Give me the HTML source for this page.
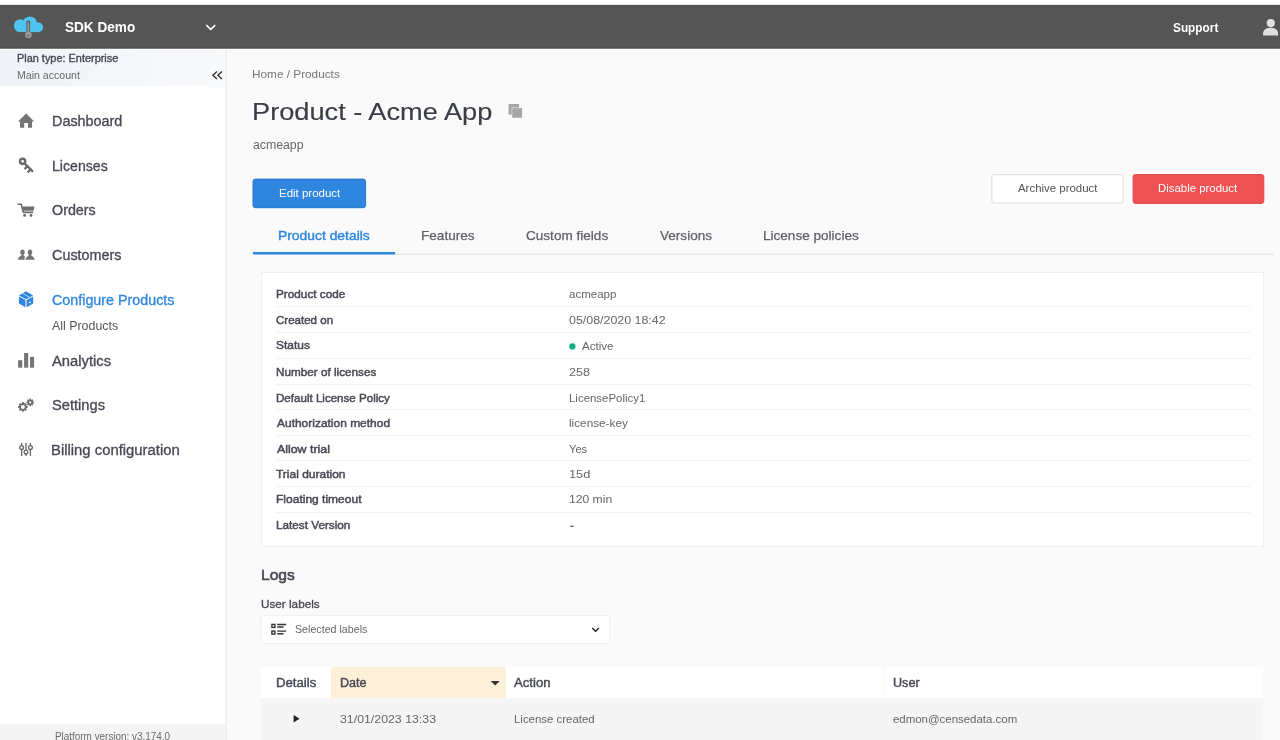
<!DOCTYPE html>
<html lang="en">
<head>
<meta charset="utf-8">
<title>Product - Acme App</title>
<style>
*{box-sizing:border-box;margin:0;padding:0}
html,body{width:1280px;height:740px;overflow:hidden;background:#fafafa;font-family:"Liberation Sans", sans-serif;color:#464854}
.t{position:absolute;white-space:nowrap;line-height:1;transform-origin:0 0}
.b{position:absolute}
svg{position:absolute;overflow:visible}
#txt{position:absolute;left:0;top:0;width:1280px;height:740px;will-change:transform}
</style>
</head>
<body>
<div class="b" style="left:0px;top:0px;width:1280px;height:5px;background:#fff;"></div>
<div class="b" style="left:0px;top:5px;width:1280px;height:43px;background:#555555;"></div>
<div class="b" style="left:0px;top:48px;width:226px;height:692px;background:#fff;"></div>
<div class="b" style="left:225px;top:48px;width:1px;height:692px;background:#f4f4f4;"></div>
<div class="b" style="left:226px;top:48px;width:1px;height:692px;background:#ececec;"></div>
<div class="b" style="left:0px;top:50px;width:225px;height:35.5px;background:linear-gradient(90deg,#eef3f9 0%,#f4f7fa 55%,#f8f9fb 100%);"></div>
<div class="b" style="left:0px;top:724px;width:225px;height:16px;background:#f4f4f4;"></div>
<div class="b" style="left:0px;top:47px;width:1280px;height:1px;background:#4e4e4e;"></div>
<div class="b" style="left:0px;top:48px;width:1280px;height:1px;background:#7c7c7c;"></div>
<div class="b" style="left:0px;top:4px;width:1280px;height:1px;background:#ececec;"></div>
<div class="b" style="left:0px;top:5px;width:1280px;height:1px;background:#4e4e4e;"></div>
<div class="b" style="left:0px;top:49px;width:1280px;height:1px;background:#ffffff;"></div>
<div class="b" style="left:208.2px;top:66.5px;width:16px;height:21px;background:#f9fafb;"></div>
<div class="b" style="left:252.5px;top:253px;width:1021.5px;height:1px;background:#f0f0f0;"></div>
<div class="b" style="left:252.5px;top:254px;width:1021.5px;height:1px;background:#e6e6e6;"></div>
<div class="b" style="left:252.5px;top:252px;width:142.5px;height:2px;background:#2e86de;"></div>
<div class="b" style="left:252.5px;top:254px;width:142.5px;height:1px;background:#8fbdec;"></div>
<div class="b" style="left:261px;top:272px;width:1003px;height:275px;background:#fff;border:1px solid #eeeeee"></div>
<div class="b" style="left:276.3px;top:306px;width:975px;height:1px;background:#f3f3f3;"></div>
<div class="b" style="left:276.3px;top:332px;width:975px;height:1px;background:#f3f3f3;"></div>
<div class="b" style="left:276.3px;top:358px;width:975px;height:1px;background:#f3f3f3;"></div>
<div class="b" style="left:276.3px;top:384px;width:975px;height:1px;background:#f3f3f3;"></div>
<div class="b" style="left:276.3px;top:409px;width:975px;height:1px;background:#f3f3f3;"></div>
<div class="b" style="left:276.3px;top:435px;width:975px;height:1px;background:#f3f3f3;"></div>
<div class="b" style="left:276.3px;top:460px;width:975px;height:1px;background:#f3f3f3;"></div>
<div class="b" style="left:276.3px;top:486px;width:975px;height:1px;background:#f3f3f3;"></div>
<div class="b" style="left:276.3px;top:512px;width:975px;height:1px;background:#f3f3f3;"></div>
<div class="b" style="left:261.2px;top:615.2px;width:348.5px;height:28.6px;background:#fff;border:1px solid #f0f0f0;border-radius:2px"></div>
<div class="b" style="left:261.2px;top:667px;width:1002.3px;height:31px;background:#fff;"></div>
<div class="b" style="left:261.2px;top:698px;width:1002.3px;height:42px;background:#f5f5f5;"></div>
<div class="b" style="left:331px;top:667px;width:174.8px;height:31px;background:#fdf0d9;"></div>
<div class="b" style="left:884.2px;top:667px;width:1px;height:31px;background:#f7f7f7;"></div>
<svg width="1280" height="740" style="left:0;top:0" viewBox="0 0 1280 740">
<rect x="253" y="179.1" width="112.6" height="28.6" rx="2.4" fill="#2e86de" stroke="#2678cc" stroke-width="1"/>
<rect x="991.8" y="174.7" width="131.3" height="28.3" rx="2.4" fill="#fff" stroke="#dadada" stroke-width="1"/>
<rect x="1133.1" y="174.5" width="130.7" height="28.9" rx="2.4" fill="#ee5253" stroke="#dc484b" stroke-width="1"/>
</svg>
<div id="txt">
<div class="t" style="left:65px;top:20px;font-size:14px;color:#fff;transform:scaleX(0.9704);font-weight:bold;">SDK Demo</div>
<div class="t" style="left:1173px;top:22px;font-size:12.3px;color:#fff;transform:scaleX(0.9615);font-weight:bold;">Support</div>
<div class="t" style="left:17px;top:54px;font-size:10px;color:#464854;transform:scaleX(1.0913);-webkit-text-stroke:0.35px #464854;">Plan type: Enterprise</div>
<div class="t" style="left:17px;top:71px;font-size:10px;color:#666;transform:scaleX(1.0578);">Main account</div>
<div class="t" style="left:52px;top:115px;font-size:13.8px;color:#464854;transform:scaleX(1.0419);-webkit-text-stroke:0.3px #464854;">Dashboard</div>
<div class="t" style="left:52px;top:160px;font-size:13.8px;color:#464854;transform:scaleX(1.0228);-webkit-text-stroke:0.3px #464854;">Licenses</div>
<div class="t" style="left:52px;top:204px;font-size:13.8px;color:#464854;transform:scaleX(1.0375);-webkit-text-stroke:0.3px #464854;">Orders</div>
<div class="t" style="left:52px;top:249px;font-size:13.8px;color:#464854;transform:scaleX(1.0424);-webkit-text-stroke:0.3px #464854;">Customers</div>
<div class="t" style="left:52px;top:294px;font-size:13.8px;color:#2e86de;transform:scaleX(1.0366);-webkit-text-stroke:0.3px #2e86de;">Configure Products</div>
<div class="t" style="left:52px;top:355px;font-size:13.8px;color:#464854;transform:scaleX(1.0692);-webkit-text-stroke:0.3px #464854;">Analytics</div>
<div class="t" style="left:52px;top:399px;font-size:13.8px;color:#464854;transform:scaleX(1.0640);-webkit-text-stroke:0.3px #464854;">Settings</div>
<div class="t" style="left:51px;top:444px;font-size:13.8px;color:#464854;transform:scaleX(1.0757);-webkit-text-stroke:0.3px #464854;">Billing configuration</div>
<div class="t" style="left:52px;top:320px;font-size:12.2px;color:#555;transform:scaleX(1.0170);">All Products</div>
<div class="t" style="left:55px;top:732px;font-size:10px;color:#6a6a6a;transform:scaleX(0.9904);">Platform version: v3.174.0</div>
<div class="t" style="left:252px;top:69px;font-size:11.3px;color:#777;transform:scaleX(1.0434);">Home / Products</div>
<div class="t" style="left:252px;top:100px;font-size:24.2px;color:#3a3c46;transform:scaleX(1.1241);-webkit-text-stroke:0.15px #3a3c46;">Product - Acme App</div>
<div class="t" style="left:253px;top:139px;font-size:12px;color:#666;transform:scaleX(1.0224);">acmeapp</div>
<div class="t" style="left:279px;top:188px;font-size:11.8px;color:#fff;transform:scaleX(0.9724);">Edit product</div>
<div class="t" style="left:1018px;top:183px;font-size:11.8px;color:#555;transform:scaleX(0.9685);">Archive product</div>
<div class="t" style="left:1158px;top:183px;font-size:11.8px;color:#fff;transform:scaleX(0.9665);">Disable product</div>
<div class="t" style="left:278px;top:229px;font-size:13px;color:#2e86de;transform:scaleX(1.0670);-webkit-text-stroke:0.4px #2e86de;">Product details</div>
<div class="t" style="left:421px;top:229px;font-size:13px;color:#5f6068;transform:scaleX(1.0443);-webkit-text-stroke:0.25px #5f6068;">Features</div>
<div class="t" style="left:526px;top:229px;font-size:13px;color:#5f6068;transform:scaleX(1.0433);-webkit-text-stroke:0.25px #5f6068;">Custom fields</div>
<div class="t" style="left:660px;top:229px;font-size:13px;color:#5f6068;transform:scaleX(1.0435);-webkit-text-stroke:0.25px #5f6068;">Versions</div>
<div class="t" style="left:763px;top:229px;font-size:13px;color:#5f6068;transform:scaleX(1.0429);-webkit-text-stroke:0.25px #5f6068;">License policies</div>
<div class="t" style="left:276px;top:289px;font-size:11.3px;color:#464854;transform:scaleX(1.0409);-webkit-text-stroke:0.45px #464854;">Product code</div>
<div class="t" style="left:569px;top:289px;font-size:11.3px;color:#666;transform:scaleX(1.0198);">acmeapp</div>
<div class="t" style="left:276px;top:315px;font-size:11.3px;color:#464854;transform:scaleX(1.0210);-webkit-text-stroke:0.45px #464854;">Created on</div>
<div class="t" style="left:569px;top:315px;font-size:11.3px;color:#666;transform:scaleX(1.0983);">05/08/2020 18:42</div>
<div class="t" style="left:276px;top:340px;font-size:11.3px;color:#464854;transform:scaleX(1.0576);-webkit-text-stroke:0.45px #464854;">Status</div>
<div class="t" style="left:582px;top:341px;font-size:11.3px;color:#666;transform:scaleX(1.0223);">Active</div>
<div class="t" style="left:276px;top:367px;font-size:11.3px;color:#464854;transform:scaleX(1.0373);-webkit-text-stroke:0.45px #464854;">Number of licenses</div>
<div class="t" style="left:569px;top:367px;font-size:11.3px;color:#666;transform:scaleX(1.1158);">258</div>
<div class="t" style="left:276px;top:393px;font-size:11.3px;color:#464854;transform:scaleX(1.0246);-webkit-text-stroke:0.45px #464854;">Default License Policy</div>
<div class="t" style="left:569px;top:393px;font-size:11.3px;color:#666;transform:scaleX(1.0131);">LicensePolicy1</div>
<div class="t" style="left:277px;top:418px;font-size:11.3px;color:#464854;transform:scaleX(1.0589);-webkit-text-stroke:0.45px #464854;">Authorization method</div>
<div class="t" style="left:569px;top:418px;font-size:11.3px;color:#666;transform:scaleX(1.0409);">license-key</div>
<div class="t" style="left:277px;top:444px;font-size:11.3px;color:#464854;transform:scaleX(1.0948);-webkit-text-stroke:0.45px #464854;">Allow trial</div>
<div class="t" style="left:569px;top:444px;font-size:11.3px;color:#666;transform:scaleX(0.9865);">Yes</div>
<div class="t" style="left:276px;top:469px;font-size:11.3px;color:#464854;transform:scaleX(1.0604);-webkit-text-stroke:0.45px #464854;">Trial duration</div>
<div class="t" style="left:569px;top:469px;font-size:11.3px;color:#666;transform:scaleX(1.1313);">15d</div>
<div class="t" style="left:276px;top:494px;font-size:11.3px;color:#464854;transform:scaleX(1.0637);-webkit-text-stroke:0.45px #464854;">Floating timeout</div>
<div class="t" style="left:569px;top:494px;font-size:11.3px;color:#666;transform:scaleX(1.0739);">120 min</div>
<div class="t" style="left:276px;top:520px;font-size:11.3px;color:#464854;transform:scaleX(1.0392);-webkit-text-stroke:0.45px #464854;">Latest Version</div>
<div class="t" style="left:570px;top:520px;font-size:11.3px;color:#555;-webkit-text-stroke:0.4px #555;">-</div>
<div class="t" style="left:261px;top:567px;font-size:15.3px;color:#464854;transform:scaleX(1.0155);-webkit-text-stroke:0.6px #464854;">Logs</div>
<div class="t" style="left:261px;top:599px;font-size:11.3px;color:#464854;transform:scaleX(1.0377);-webkit-text-stroke:0.3px #464854;">User labels</div>
<div class="t" style="left:295px;top:624px;font-size:10.5px;color:#666;transform:scaleX(1.0161);">Selected labels</div>
<div class="t" style="left:276px;top:677px;font-size:12px;color:#464854;transform:scaleX(1.0996);-webkit-text-stroke:0.4px #464854;">Details</div>
<div class="t" style="left:340px;top:677px;font-size:12px;color:#464854;transform:scaleX(1.0448);-webkit-text-stroke:0.4px #464854;">Date</div>
<div class="t" style="left:514px;top:677px;font-size:12px;color:#464854;transform:scaleX(1.0974);-webkit-text-stroke:0.4px #464854;">Action</div>
<div class="t" style="left:893px;top:677px;font-size:12px;color:#464854;transform:scaleX(1.0519);-webkit-text-stroke:0.4px #464854;">User</div>
<div class="t" style="left:340px;top:714px;font-size:11.5px;color:#666;transform:scaleX(1.0724);">31/01/2023 13:33</div>
<div class="t" style="left:514px;top:714px;font-size:11.5px;color:#666;transform:scaleX(0.9936);">License created</div>
<div class="t" style="left:893px;top:714px;font-size:11.5px;color:#666;transform:scaleX(0.9948);">edmon@censedata.com</div>
</div>
<svg width="1280" height="740" style="left:0;top:0" viewBox="0 0 1280 740">
<!-- logo -->
<g fill="#4fc3f0"><circle cx="20.2" cy="25.7" r="6.4"/><circle cx="29.8" cy="23.6" r="7.2"/><circle cx="38.2" cy="27.3" r="4.9"/><rect x="19.6" y="25" width="18.6" height="7.1"/></g>
<path d="M28.3 22.2V33" stroke="#555555" stroke-width="3.6" stroke-linecap="round"/>
<path d="M28.3 22.8V33.5" stroke="#a09a96" stroke-width="1.7" stroke-linecap="round"/>
<circle cx="28.4" cy="34.9" r="3.3" fill="#9a9a9a"/><circle cx="28.4" cy="35.6" r="1" fill="#6a6a6a"/>
<!-- header chevron -->
<path d="M206.3 25.1L210.75 29.3L215.2 25.1" fill="none" stroke="#fff" stroke-width="1.6"/>
<!-- user -->
<g fill="#e0e0e0"><circle cx="1270.8" cy="23.1" r="4.1"/><path d="M1263.1 35.5V33.2C1263.1 29.8 1266.3 27.7 1270.6 27.7C1274.9 27.7 1278.1 29.8 1278.1 33.2V35.5Z"/></g>
<!-- collapse -->
<path d="M217 71.6L212.9 75.3L217 79M222 71.6L217.9 75.3L222 79" fill="none" stroke="#333" stroke-width="1.4"/>
<!-- home -->
<path d="M26.2 113.4L17.9 121.6H20V127.8H24.2V123H28V127.8H32V121.6H34.2Z" fill="#757575"/>
<!-- key -->
<circle cx="22.6" cy="161.35" r="2.6" fill="none" stroke="#6a6a6a" stroke-width="2.4"/>
<path d="M24.9 163.7L32.2 170.9M27.4 166.2L25.3 168.3M30.6 169.4L28.5 171.6" fill="none" stroke="#6a6a6a" stroke-width="2.3" stroke-linecap="square"/>
<!-- cart -->
<path d="M18.1 204.3H21.2L23.4 212.4H32.6" fill="none" stroke="#686868" stroke-width="1.6" stroke-linecap="round" stroke-linejoin="round"/>
<path d="M22.5 206.6H34.5L33.5 210.8H23.6Z" fill="#707070"/>
<circle cx="24.6" cy="215.4" r="1.4" fill="#666"/><circle cx="31" cy="215.4" r="1.4" fill="#666"/>
<!-- customers -->
<g fill="#757575"><ellipse cx="22.5" cy="252.3" rx="2.2" ry="2.7"/><path d="M17.9 259.7C17.9 257.6 19.6 256.6 21.4 255.6H23.7L24.9 256.3L24.4 259.7Z"/>
<ellipse cx="30" cy="252.3" rx="2.2" ry="2.7"/><path d="M25.4 259.7C25.4 257.6 27.3 256.6 28.9 255.3V254H31.1V255.3C32.7 256.6 34.6 257.6 34.6 259.7Z"/></g>
<path d="M22.5 254.5V256" stroke="#757575" stroke-width="2.2"/>
<!-- box -->
<g fill="#2e86de"><path d="M26 291.2L33.2 295.4L26 299.2L18.9 295.4Z"/><path d="M18.9 296.4L25.5 300V307.2L18.9 303.6Z"/><path d="M26.6 300L33.2 296.4V303.6L26.6 307.2Z"/></g>
<path d="M22.3 293.1L29.6 297.4" stroke="#b9dcf8" stroke-width="1"/><path d="M28.8 302.8L30.8 301.7" stroke="#e6f2fd" stroke-width="1.3"/>
<!-- bars -->
<g fill="#757575"><rect x="18.1" y="360.2" width="4.2" height="7.5"/><rect x="24.1" y="353" width="4.1" height="14.7"/><rect x="30" y="356.8" width="4.1" height="10.9"/></g>
<!-- gears -->
<path d="M26.39 405.81 L27.69 406.10 L27.69 407.70 L26.39 407.99 L26.13 408.63 L26.85 409.75 L25.71 410.89 L24.59 410.17 L23.95 410.43 L23.66 411.73 L22.06 411.73 L21.77 410.43 L21.13 410.17 L20.01 410.89 L18.87 409.75 L19.59 408.63 L19.33 407.99 L18.03 407.70 L18.03 406.10 L19.33 405.81 L19.59 405.17 L18.87 404.05 L20.01 402.91 L21.13 403.63 L21.77 403.37 L22.06 402.07 L23.66 402.07 L23.95 403.37 L24.59 403.63 L25.71 402.91 L26.85 404.05 L26.13 405.17Z M24.86 406.90 A2.0 2.0 0 1 0 20.86 406.90 A2.0 2.0 0 1 0 24.86 406.90Z" fill="#6e6e6e" fill-rule="evenodd"/><path d="M32.97 401.54 L34.05 401.76 L34.05 403.04 L32.97 403.26 L32.77 403.75 L33.37 404.67 L32.47 405.57 L31.55 404.97 L31.06 405.17 L30.84 406.25 L29.56 406.25 L29.34 405.17 L28.85 404.97 L27.93 405.57 L27.03 404.67 L27.63 403.75 L27.43 403.26 L26.35 403.04 L26.35 401.76 L27.43 401.54 L27.63 401.05 L27.03 400.13 L27.93 399.23 L28.85 399.83 L29.34 399.63 L29.56 398.55 L30.84 398.55 L31.06 399.63 L31.55 399.83 L32.47 399.23 L33.37 400.13 L32.77 401.05Z M31.35 402.40 A1.15 1.15 0 1 0 29.05 402.40 A1.15 1.15 0 1 0 31.35 402.40Z" fill="#6e6e6e" fill-rule="evenodd"/>
<!-- sliders -->
<path d="M21.65 443.1V455.9M26 443.1V455.9M30.45 443.1V455.9" stroke="#666" stroke-width="1.3"/>
<g fill="#fff" stroke="#666" stroke-width="1.3"><circle cx="21.65" cy="447.6" r="1.9"/><circle cx="26" cy="452" r="1.9"/><circle cx="30.45" cy="447.6" r="1.9"/></g>
<circle cx="572.35" cy="346.4" r="3.15" fill="#10ac84"/>
<!-- copy -->
<rect x="508.6" y="104" width="10.5" height="10.7" fill="#a6a6a6"/><rect x="511.7" y="107.6" width="10.9" height="10.6" fill="#fafafa"/><rect x="512.2" y="108.1" width="9.9" height="9.6" fill="#a6a6a6"/>
<!-- select icon -->
<g fill="none" stroke="#333" stroke-width="1.4"><rect x="271.9" y="624.4" width="3" height="3"/><rect x="271.9" y="631.1" width="3" height="3"/></g>
<path d="M277.2 624.4H286.2M277.2 627H283.5M277.2 631.1H286.2M277.2 633.7H283.5" stroke="#333" stroke-width="1.45"/>
<!-- select chevron -->
<path d="M592.2 627.9L595.55 631.2L598.9 627.9" fill="none" stroke="#222" stroke-width="1.4"/>
<!-- sort caret / row triangle -->
<path d="M490.7 681H499.7L495.2 685.5Z" fill="#333"/>
<path d="M293.6 714.9L299.5 718.7L293.6 722.5Z" fill="#222"/>
</svg>
</body>
</html>
